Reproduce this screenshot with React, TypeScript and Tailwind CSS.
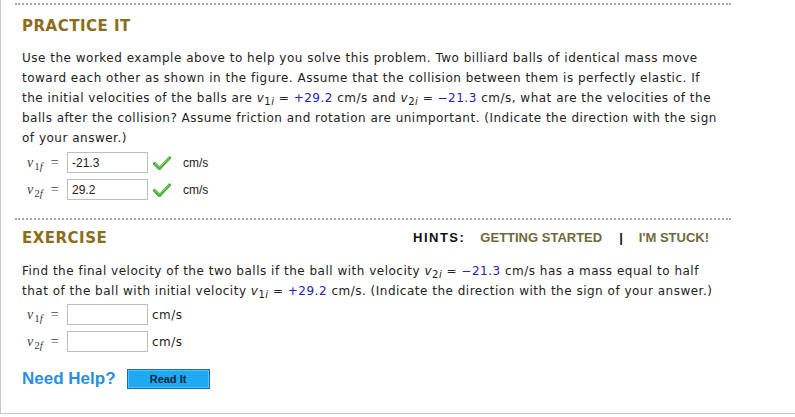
import React from "react";

const body = { fontFamily: '"DejaVu Sans", Verdana, sans-serif' };
const arial = { fontFamily: '"Liberation Sans", Arial, sans-serif' };
const times = { fontFamily: '"Liberation Serif", "Times New Roman", serif' };

function V({ sub, suffix }: { sub: string; suffix: string }) {
  return (
    <span className="whitespace-nowrap">
      <i>v</i>
      <sub className="text-[10px] leading-none">
        {sub}
        <i>{suffix}</i>
      </sub>
    </span>
  );
}

function Num({ children }: { children: React.ReactNode }) {
  return <span className="text-[#2323b8]">{children}</span>;
}

function Check() {
  return (
    <svg width="18" height="14" viewBox="0 0 18 14">
      <path d="M1.5 7.5 L6.5 12.5 L16.5 2" stroke="#4fae3d" strokeWidth="3.2" fill="none" strokeLinecap="round" strokeLinejoin="round" />
      <path d="M2 7.2 L6.5 11.2 L16 2.2" stroke="#8fd47a" strokeWidth="1" fill="none" strokeLinecap="round" />
    </svg>
  );
}

function AnswerRow({ sub, value, checked }: { sub: string; value?: string; checked?: boolean }) {
  return (
    <div className="flex items-center h-[27px]">
      <span className="w-[45px] pl-[5px] text-[14px] text-[#444] whitespace-nowrap" style={times}>
        <i>v</i>
        <sub className="text-[11px] leading-none ml-[1px]">
          {sub}
          <i>f</i>
        </sub>
        <span className="ml-[8px]">=</span>
      </span>
      <div
        className="w-[81px] h-[21px] border border-[#bdbdbd] bg-white flex items-center px-[4px] text-[12px] text-[#222]"
        style={arial}
      >
        {value}
      </div>
      {checked ? (
        <>
          <span className="ml-[5px] w-[30px] flex items-center">
            <Check />
          </span>
          <span className="text-[12px] text-[#222]" style={arial}>cm/s</span>
        </>
      ) : (
        <span className="ml-[4px] text-[12px] tracking-[0.5px] text-[#222]" style={body}>cm/s</span>
      )}
    </div>
  );
}

export default function App() {
  return (
    <div className="w-[795px] h-[414px] bg-white border-l border-b border-[#c8c8c8] overflow-hidden">
      <div className="ml-[14px] w-[716px] pt-[3px]">
        <div className="border-t-2 border-dotted border-[#a8a8a8]" />

        <div className="pl-[7px]">
          <h2 className="mt-[12px] text-[15px] font-bold tracking-[0.5px] text-[#8b6d1c] leading-[18px]" style={body}>
            PRACTICE IT
          </h2>
          <p className="mt-[13px] text-[12px] leading-[20px] tracking-[0.5px] text-[#222] whitespace-nowrap" style={body}>
            Use the worked example above to help you solve this problem. Two billiard balls of identical mass move
            <br />
            toward each other as shown in the figure. Assume that the collision between them is perfectly elastic. If
            <br />
            the initial velocities of the balls are <V sub="1" suffix="i" /> = <Num>+29.2</Num> cm/s and{" "}
            <V sub="2" suffix="i" /> = <Num>−21.3</Num> cm/s, what are the velocities of the
            <br />
            balls after the collision? Assume friction and rotation are unimportant. (Indicate the direction with the sign
            <br />
            of your answer.)
          </p>
          <div className="mt-[1px]">
            <AnswerRow sub="1" value="-21.3" checked />
            <AnswerRow sub="2" value="29.2" checked />
          </div>
        </div>

        <div className="mt-[15px] border-t-2 border-dotted border-[#a8a8a8]" />

        <div className="pl-[7px]">
          <div className="mt-[9px] flex items-center leading-[18px]">
            <h2 className="w-[391px] text-[15px] font-bold tracking-[0.5px] text-[#8b6d1c]" style={body}>
              EXERCISE
            </h2>
            <div className="flex items-center text-[13px] font-bold" style={arial}>
              <span className="text-[#111] tracking-[1.5px]">HINTS:</span>
              <span className="ml-[15px] text-[#6f6a3c]">GETTING STARTED</span>
              <span className="ml-[17px] text-[#111]">|</span>
              <span className="ml-[16px] text-[#6f6a3c]">I'M STUCK!</span>
            </div>
          </div>
          <p className="mt-[14px] text-[12px] leading-[20px] tracking-[0.5px] text-[#222] whitespace-nowrap" style={body}>
            Find the final velocity of the two balls if the ball with velocity <V sub="2" suffix="i" /> ={" "}
            <Num>−21.3</Num> cm/s has a mass equal to half
            <br />
            that of the ball with initial velocity <V sub="1" suffix="i" /> = <Num>+29.2</Num> cm/s. (Indicate the
            direction with the sign of your answer.)
          </p>
          <div className="mt-0">
            <AnswerRow sub="1" />
            <AnswerRow sub="2" />
          </div>
          <div className="mt-[11px] flex items-center">
            <span className="text-[17px] font-bold text-[#2a8ee0]" style={arial}>
              Need Help?
            </span>
            <button
              className="ml-[11px] w-[83px] h-[20px] bg-[#1eaaf2] border border-[#1a6cb8] shadow-[inset_0_0_0_1px_#52c2f7] text-[11px] font-bold text-[#0d2340]"
              style={arial}
            >
              Read It
            </button>
          </div>
        </div>
      </div>
    </div>
  );
}
